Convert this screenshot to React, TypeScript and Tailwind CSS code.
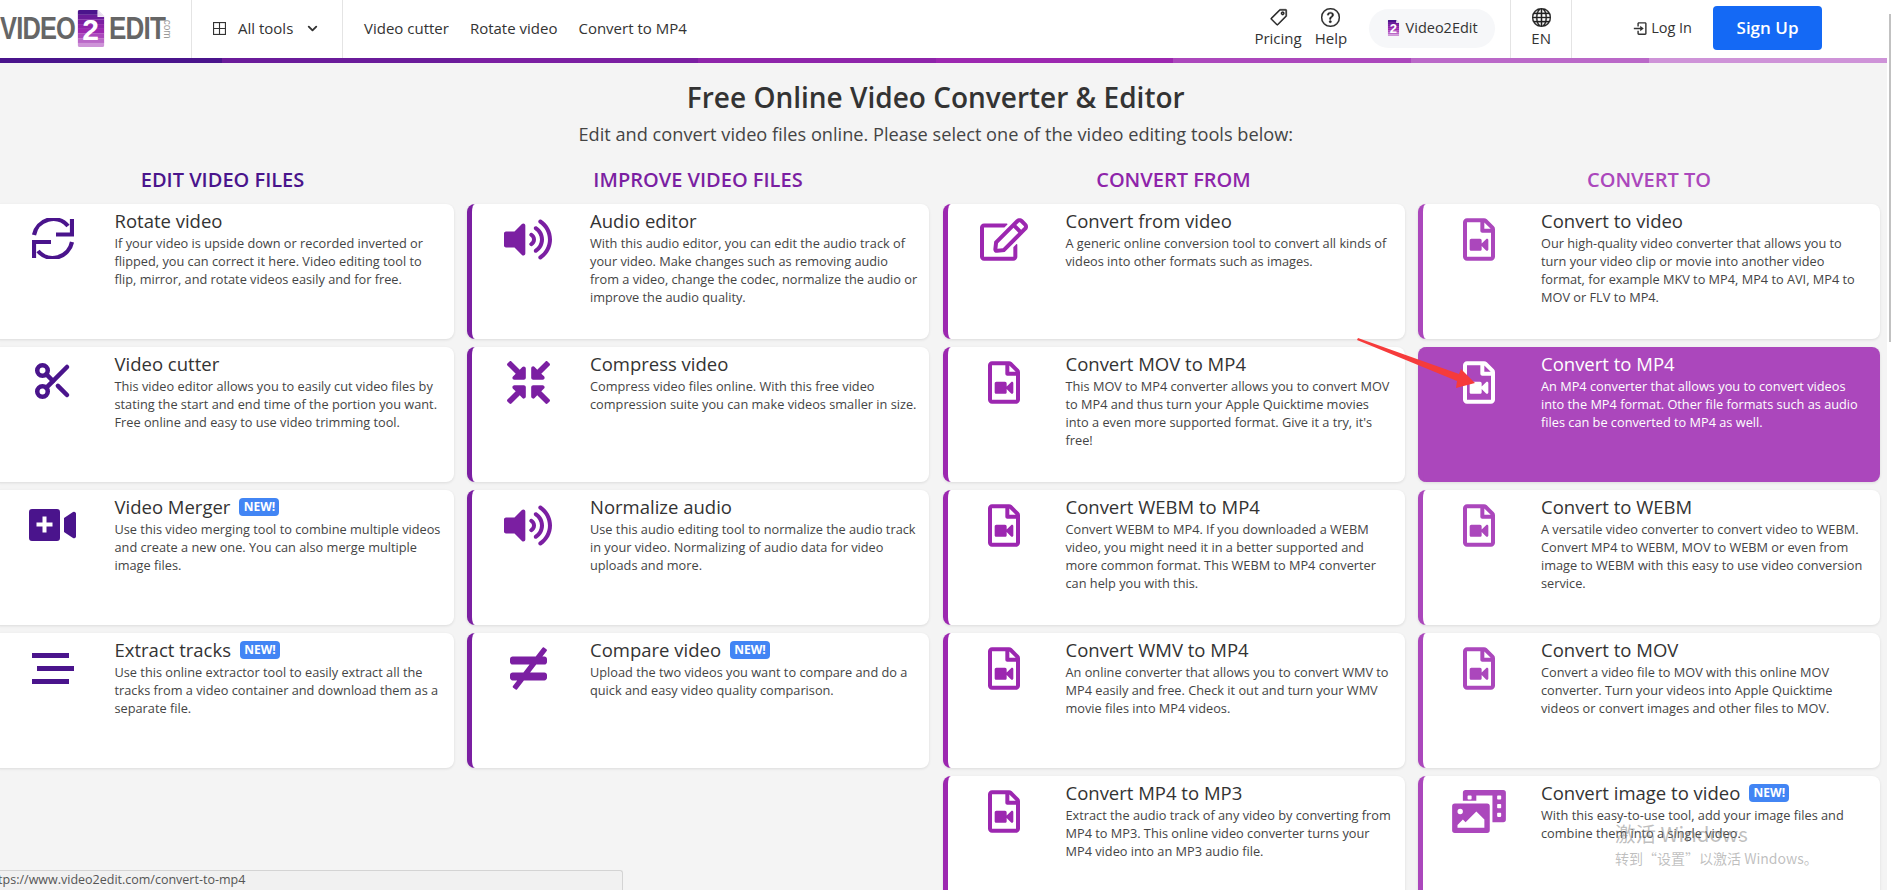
import type { ReactNode } from "react";
import { ChevronDown, Scissors } from "lucide-react";
import { BsGlobe, BsQuestionCircle, BsTag } from "react-icons/bs";
import { BiLogIn } from "react-icons/bi";
import {
  FaCompressArrowsAlt,
  FaNotEqual,
  FaPhotoVideo,
  FaRegEdit,
  FaRegFileVideo,
  FaVolumeUp,
} from "react-icons/fa";

const stripes = ["#4a148c", "#6a1b9a", "#7b1fa2", "#8e24aa", "#9c27b0", "#ab47bc", "#ba68c8", "#ce93d8"];

function LogoFile({ className }: { className: string }) {
  return (
    <svg viewBox="0 0 27 37" className={className}>
      <defs>
        <clipPath id="logo-file">
          <path d="M2 0H20L27 7V35a2 2 0 0 1-2 2H2a2 2 0 0 1-2-2V2a2 2 0 0 1 2-2Z" />
        </clipPath>
      </defs>
      <g clipPath="url(#logo-file)">
        {stripes.map((c, i) => (
          <rect key={c} x="0" y={i * 4.7} width="27" height="4.8" fill={c} />
        ))}
      </g>
      <path d="M20 0V7H27Z" fill="#fff" />
      <path d="M20.5 1.5V6.5H26" fill="#e6d7ee" />
      <text x="13" y="30" textAnchor="middle" fontFamily="Liberation Sans" fontWeight="700" fontSize="30" fill="#fff">
        2
      </text>
    </svg>
  );
}

function Logo() {
  return (
    <div className="flex h-full w-[191px] shrink-0 items-center pb-[2px] font-['Liberation_Sans'] font-bold text-[#666]">
      <span className="inline-block w-[77px] origin-left scale-x-[0.82] text-[31px] leading-none tracking-[-1px]">VIDEO</span>
      <LogoFile className="h-[37px] w-[28px] shrink-0" />
      <span className="ml-[4px] inline-block w-[53px] origin-left scale-x-[0.84] overflow-visible text-[31px] leading-none tracking-[-1px]">EDIT</span>
      <span className="text-[10px] font-normal leading-none text-[#999] [writing-mode:vertical-rl]">.com</span>
    </div>
  );
}

function TopLink({ icon, label }: { icon: ReactNode; label: string }) {
  return (
    <a className="flex flex-col items-center">
      <span className="flex h-[19px] items-center text-[19px] text-[#222]">{icon}</span>
      <span className="mt-[1px] text-[15px] leading-[20px] text-[#333]">{label}</span>
    </a>
  );
}

function Header() {
  return (
    <header className="flex h-[58px] items-stretch bg-white font-['Open_Sans',sans-serif] text-[15px] text-[#333]">
      <Logo />
      <div className="flex w-[151px] shrink-0 items-center border-l border-[#e4e4e4] pb-[2px] pl-[21px]">
        <svg viewBox="0 0 14 14" className="h-[13px] w-[13px]" fill="none" stroke="#333" strokeWidth="1.2">
          <rect x="0.6" y="0.6" width="12.8" height="12.8" />
          <path d="M7 0.6V13.4M0.6 7H13.4" />
        </svg>
        <span className="ml-[12px]">All tools</span>
        <ChevronDown className="ml-[12px] h-[15px] w-[15px]" strokeWidth={3} />
      </div>
      <nav className="flex items-center gap-[21px] border-l border-[#e4e4e4] pb-[2px] pl-[21px]">
        <a>Video cutter</a>
        <a>Rotate video</a>
        <a>Convert to MP4</a>
      </nav>
      <div className="ml-auto flex items-stretch pr-[65px]">
        <div className="flex items-center gap-[13px] pb-[2px]">
          <TopLink icon={<BsTag className="-scale-x-100 stroke-[0.3]" />} label="Pricing" />
          <TopLink icon={<BsQuestionCircle className="stroke-[0.3]" />} label="Help" />
        </div>
        <div className="ml-[22px] mr-[15px] flex items-center pb-[2px]">
          <div className="flex h-[39px] w-[126px] items-center justify-center gap-[6px] rounded-full bg-[#f6f7f9] text-[14.5px] font-medium">
            <LogoFile className="h-[16px] w-[13px]" />
            <span>Video2Edit</span>
          </div>
        </div>
        <div className="flex w-[62px] items-center justify-center border-x border-[#e4e4e4] pb-[2px]">
          <TopLink icon={<BsGlobe className="stroke-[0.3]" />} label="EN" />
        </div>
        <div className="ml-[59px] flex items-center gap-[3px] pb-[2px]">
          <BiLogIn className="h-[17px] w-[17px]" />
          <span className="text-[14.5px]">Log In</span>
        </div>
        <div className="ml-[21px] flex items-center pb-[2px]">
          <a className="flex h-[44px] w-[109px] items-center justify-center rounded-[4px] bg-[#1469f5] text-[17px] font-semibold text-white">
            Sign Up
          </a>
        </div>
      </div>
    </header>
  );
}

function RotateIcon() {
  return (
    <svg viewBox="0 0 42 41" className="h-[41px] w-[42px]" fill="none" stroke="currentColor" strokeWidth="4.2">
      <path d="M2 17A19.5 19.5 0 0 1 36 8" />
      <path d="M40 1V16.5H24" />
      <path d="M40 24A19.5 19.5 0 0 1 6 33" />
      <path d="M2 40V24H19" />
    </svg>
  );
}

function MergeIcon() {
  return (
    <svg viewBox="0 0 47 32" className="h-[32px] w-[47px]">
      <path
        fill="currentColor"
        d="M3 0H28a3 3 0 0 1 3 3V29a3 3 0 0 1-3 3H3a3 3 0 0 1-3-3V3a3 3 0 0 1 3-3ZM35 9L44 3a2 2 0 0 1 3 1.6V27.4a2 2 0 0 1-3 1.6L35 23Z"
      />
      <path d="M15.5 7.5V23.5M7.5 15.5H23.5" stroke="#fff" strokeWidth="4" />
    </svg>
  );
}

function TracksIcon() {
  return (
    <svg viewBox="0 0 42 31" className="h-[31px] w-[42px]" fill="currentColor">
      <rect x="0" y="0" width="37" height="5" />
      <rect x="5" y="13" width="37" height="5" />
      <rect x="0" y="26" width="37" height="5" />
    </svg>
  );
}

const fileIcon = <FaRegFileVideo className="h-[43px] w-[32px]" />;

type Tool = { title: string; text: string; icon: ReactNode; isNew?: boolean; active?: boolean };
type Column = { heading: string; headingClass: string; borderClass: string; iconClass: string; tools: Tool[] };

const columns: Column[] = [
  {
    heading: "EDIT VIDEO FILES",
    headingClass: "text-[#4a148c]",
    borderClass: "border-[#4a148c]",
    iconClass: "text-[#4a148c]",
    tools: [
      {
        title: "Rotate video",
        text: "If your video is upside down or recorded inverted or flipped, you can correct it here. Video editing tool to flip, mirror, and rotate videos easily and for free.",
        icon: <RotateIcon />,
      },
      {
        title: "Video cutter",
        text: "This video editor allows you to easily cut video files by stating the start and end time of the portion you want. Free online and easy to use video trimming tool.",
        icon: <Scissors className="h-[42px] w-[42px] -translate-y-[1px]" strokeWidth={2.6} />,
      },
      {
        title: "Video Merger",
        isNew: true,
        text: "Use this video merging tool to combine multiple videos and create a new one. You can also merge multiple image files.",
        icon: <div className="pt-[5px]"><MergeIcon /></div>,
      },
      {
        title: "Extract tracks",
        isNew: true,
        text: "Use this online extractor tool to easily extract all the tracks from a video container and download them as a separate file.",
        icon: <div className="pt-[6px]"><TracksIcon /></div>,
      },
    ],
  },
  {
    heading: "IMPROVE VIDEO FILES",
    headingClass: "text-[#7b1fa2]",
    borderClass: "border-[#7b1fa2]",
    iconClass: "text-[#7b1fa2]",
    tools: [
      {
        title: "Audio editor",
        text: "With this audio editor, you can edit the audio track of your video. Make changes such as removing audio from a video, change the codec, normalize the audio or improve the audio quality.",
        icon: <FaVolumeUp className="h-[43px] w-[48px]" />,
      },
      {
        title: "Compress video",
        text: "Compress video files online. With this free video compression suite you can make videos smaller in size.",
        icon: <FaCompressArrowsAlt className="h-[43px] w-[43px]" />,
      },
      {
        title: "Normalize audio",
        text: "Use this audio editing tool to normalize the audio track in your video. Normalizing of audio data for video uploads and more.",
        icon: <FaVolumeUp className="h-[43px] w-[48px]" />,
      },
      {
        title: "Compare video",
        isNew: true,
        text: "Upload the two videos you want to compare and do a quick and easy video quality comparison.",
        icon: <FaNotEqual className="h-[43px] w-[37px]" />,
      },
    ],
  },
  {
    heading: "CONVERT FROM",
    headingClass: "text-[#8e24aa]",
    borderClass: "border-[#9c27b0]",
    iconClass: "text-[#9c27b0]",
    tools: [
      {
        title: "Convert from video",
        text: "A generic online conversion tool to convert all kinds of videos into other formats such as images.",
        icon: <FaRegEdit className="h-[43px] w-[48px]" />,
      },
      {
        title: "Convert MOV to MP4",
        text: "This MOV to MP4 converter allows you to convert MOV to MP4 and thus turn your Apple Quicktime movies into a even more supported format. Give it a try, it's free!",
        icon: fileIcon,
      },
      {
        title: "Convert WEBM to MP4",
        text: "Convert WEBM to MP4. If you downloaded a WEBM video, you might need it in a better supported and more common format. This WEBM to MP4 converter can help you with this.",
        icon: fileIcon,
      },
      {
        title: "Convert WMV to MP4",
        text: "An online converter that allows you to convert WMV to MP4 easily and free. Check it out and turn your WMV movie files into MP4 videos.",
        icon: fileIcon,
      },
      {
        title: "Convert MP4 to MP3",
        text: "Extract the audio track of any video by converting from MP4 to MP3. This online video converter turns your MP4 video into an MP3 audio file.",
        icon: fileIcon,
      },
    ],
  },
  {
    heading: "CONVERT TO",
    headingClass: "text-[#ab47bc]",
    borderClass: "border-[#ab47bc]",
    iconClass: "text-[#ab47bc]",
    tools: [
      {
        title: "Convert to video",
        text: "Our high-quality video converter that allows you to turn your video clip or movie into another video format, for example MKV to MP4, MP4 to AVI, MP4 to MOV or FLV to MP4.",
        icon: fileIcon,
      },
      {
        title: "Convert to MP4",
        active: true,
        text: "An MP4 converter that allows you to convert videos into the MP4 format. Other file formats such as audio files can be converted to MP4 as well.",
        icon: fileIcon,
      },
      {
        title: "Convert to WEBM",
        text: "A versatile video converter to convert video to WEBM. Convert MP4 to WEBM, MOV to WEBM or even from image to WEBM with this easy to use video conversion service.",
        icon: fileIcon,
      },
      {
        title: "Convert to MOV",
        text: "Convert a video file to MOV with this online MOV converter. Turn your videos into Apple Quicktime videos or convert images and other files to MOV.",
        icon: fileIcon,
      },
      {
        title: "Convert image to video",
        isNew: true,
        text: "With this easy-to-use tool, add your image files and combine them into a single video.",
        icon: <FaPhotoVideo className="h-[43px] w-[54px]" />,
      },
    ],
  },
];

function ToolCard({ tool, column }: { tool: Tool; column: Column }) {
  return (
    <a
      className={`flex h-[135px] rounded-lg border-l-[5px] shadow-[0_1px_3px_rgba(0,0,0,0.1)] ${
        tool.active ? "border-[#ab47bc] bg-[#ab47bc] text-white" : `${column.borderClass} bg-white`
      }`}
    >
      <div
        className={`flex w-[112px] shrink-0 justify-center pt-[14px] ${tool.active ? "text-white" : column.iconClass}`}
      >
        {tool.icon}
      </div>
      <div className="ml-[6px] pr-[11px] pt-[5px]">
        <div className={`mb-[1px] flex h-[24px] items-center gap-[9px] text-[18.5px] font-medium ${tool.active ? "" : "text-[#333]"}`}>
          {tool.title}
          {tool.isNew && (
            <span className="flex h-[18px] w-[40px] items-center justify-center rounded-[4px] bg-[#4285f4] text-[12px] font-bold text-white">
              NEW!
            </span>
          )}
        </div>
        <p className={`text-[12.75px] leading-[18px] ${tool.active ? "" : "text-[#444]"}`}>{tool.text}</p>
      </div>
    </a>
  );
}

export default function App() {
  return (
    <div className="relative flex h-screen overflow-hidden bg-[#f4f4f4] font-['Open_Sans',sans-serif]">
      <div className="min-w-0 flex-1 overflow-hidden">
        <Header />
        <div className="-ml-[16px] flex h-[5px]">
          {stripes.map((c) => (
            <div key={c} className="flex-1" style={{ backgroundColor: c }} />
          ))}
        </div>
        <main className="-ml-[8.5px] w-[1888.5px] pt-[17px]">
          <h1 className="text-center text-[28px] font-semibold leading-[34px] text-[#333]">
            Free Online Video Converter &amp; Editor
          </h1>
          <p className="mt-[8px] text-center text-[18.2px] leading-[24px] text-[#444]">
            Edit and convert video files online. Please select one of the video editing tools below:
          </p>
          <div className="mt-[22px] grid grid-cols-[repeat(4,462px)] gap-x-[13.5px]">
            {columns.map((column) => (
              <section key={column.heading}>
                <h2 className={`text-center text-[20px] font-semibold leading-[24px] ${column.headingClass}`}>
                  {column.heading}
                </h2>
                <div className="mt-[12px] flex flex-col gap-[8px]">
                  {column.tools.map((tool) => (
                    <ToolCard key={tool.title} tool={tool} column={column} />
                  ))}
                </div>
              </section>
            ))}
          </div>
        </main>
      </div>
      <div className="flex w-[4px] shrink-0 justify-end bg-white">
        <div className="mt-[14px] h-[328px] w-[2px] bg-[#c1c1c1]" />
      </div>

      {/* red annotation arrow from the screenshot */}
      <svg className="absolute left-[1350px] top-[330px] h-[65px] w-[135px]" viewBox="1350 330 135 65">
        <path d="M1358 338L1459 374L1461 369L1475 383L1456 388L1457 381L1357 340Z" fill="#f63b3b" />
      </svg>

      {/* browser link preview */}
      <div className="absolute bottom-0 left-0 h-[20px] w-[623px] overflow-hidden rounded-tr-[3px] border-r border-t border-[#d4d4d4] bg-[#f1f1f1] text-[12.5px] leading-[18px] text-[#555]">
        <span className="-ml-[14px] block whitespace-nowrap">https://www.video2edit.com/convert-to-mp4</span>
      </div>

      {/* windows activation watermark */}
      <div className="pointer-events-none absolute left-[1615px] top-[820px] font-['Noto_Sans_CJK_SC',sans-serif] text-[#7f7f7f]/50">
        <div className="text-[20.5px] leading-[26px]">激活 Windows</div>
        <div className="mt-[2px] text-[14px] leading-[20px]">转到“设置”以激活 Windows。</div>
      </div>
    </div>
  );
}
